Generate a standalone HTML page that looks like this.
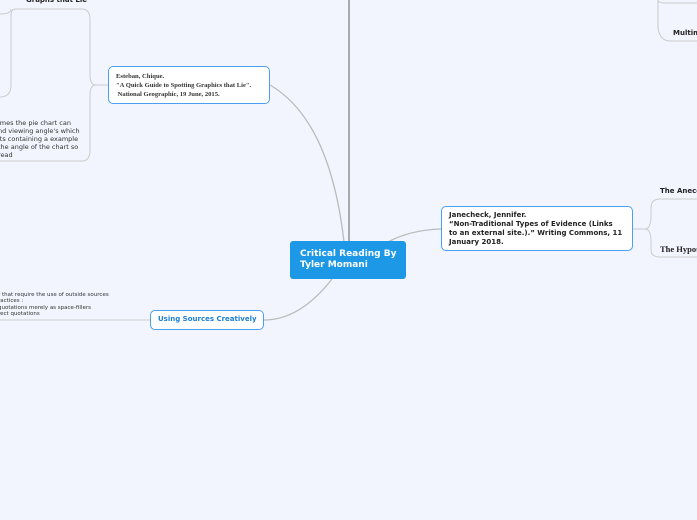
<!DOCTYPE html>
<html><head><style>
body{margin:0;width:697px;height:520px;background:#f2f5fe;position:relative;overflow:hidden;font-family:"DejaVu Sans","Liberation Sans",sans-serif;}
.t{position:absolute;white-space:nowrap;color:#222;}
.box{position:absolute;background:#fff;border:1.5px solid #4a9ff0;border-radius:5px;box-sizing:border-box;}
</style></head><body>
<svg width="697" height="520" style="position:absolute;left:0;top:0" fill="none">
<line x1="349" y1="0" x2="349" y2="242" stroke="#aaa" stroke-width="2"/>
<path d="M344 242 Q330 120 270 85" stroke="#bbb" stroke-width="1.3"/>
<path d="M108 85 H96 Q90 85 90 75 V20 Q90 9 82 9 H25" stroke="#ccc" stroke-width="1"/>
<path d="M96 85 Q90 85 90 95 V150 Q90 161 82 161 H0" stroke="#ccc" stroke-width="1"/>
<path d="M25 9 H16 Q11 9 11 15 V85 Q11 97 0 97" stroke="#ccc" stroke-width="1"/>
<path d="M0 14 Q11 14 11 9" stroke="#ccc" stroke-width="1"/>
<path d="M332 279 Q300 320 264 320" stroke="#bbb" stroke-width="1.3"/>
<line x1="0" y1="320" x2="150" y2="320" stroke="#ccc" stroke-width="1"/>
<path d="M388 242 Q410 230 441 229" stroke="#bbb" stroke-width="1.3"/>
<path d="M632 229 H645 Q651 229 651 215 V208 Q651 199 660 199 H697" stroke="#ccc" stroke-width="1"/>
<path d="M645 229 Q651 229 651 242 V250 Q651 257 660 257 H697" stroke="#ccc" stroke-width="1"/>
<path d="M658 0 Q658 3 665 3 H697" stroke="#ccc" stroke-width="1"/>
<path d="M658 0 V28 Q660 41 670 41 H697" stroke="#ccc" stroke-width="1"/>
</svg>
<div class="t" style="left:26px;top:-4px;font-size:7px;font-weight:bold">Graphs that Lie</div>
<div class="t" style="left:-2px;top:119px;font-size:6.5px;line-height:8px;color:#333">imes the pie chart can<br>nd viewing angle's which<br>its containing a example<br>the angle of the chart so<br>read</div>
<div class="box" style="left:108px;top:66px;width:162px;height:38px;"></div>
<div class="t" style="left:116px;top:72px;font-family:'Liberation Serif',serif;font-weight:bold;font-size:6.6px;line-height:9px;color:#333">Esteban, Chique.<br>"A Quick Guide to Spotting Graphics that Lie".<br>&nbsp;National Geographic, 19 June, 2015.</div>
<div style="position:absolute;left:290px;top:241px;width:116px;height:38px;background:#1c98e6;border-radius:3px;"></div>
<div class="t" style="left:300px;top:249px;font-size:9px;font-weight:bold;color:#fff;line-height:11px">Critical Reading By<br>Tyler Momani</div>
<div class="t" style="left:-2px;top:292px;font-size:5.5px;line-height:6.3px;color:#333">r that require the use of outside sources<br>ractices :<br>quotations merely as space-fillers<br>rect quotations</div>
<div class="box" style="left:150px;top:310px;width:114px;height:20px;"></div>
<div class="t" style="left:158px;top:315px;font-size:7px;font-weight:bold;color:#1c7fd6">Using Sources Creatively</div>
<div class="box" style="left:441px;top:206px;width:192px;height:45px;"></div>
<div class="t" style="left:449px;top:211px;font-size:7px;font-weight:bold;line-height:9px;color:#222">Janecheck, Jennifer.<br>“Non-Traditional Types of Evidence (Links<br>to an external site.).” Writing Commons, 11<br>January 2018.</div>
<div class="t" style="left:660px;top:187px;font-size:7px;font-weight:bold">The Anecdote</div>
<div class="t" style="left:660px;top:244px;font-size:8.5px;font-weight:bold;font-family:'Liberation Serif',serif">The Hypothetical</div>
<div class="t" style="left:673px;top:29px;font-size:7px;font-weight:bold">Multimedia</div>
</body></html>
